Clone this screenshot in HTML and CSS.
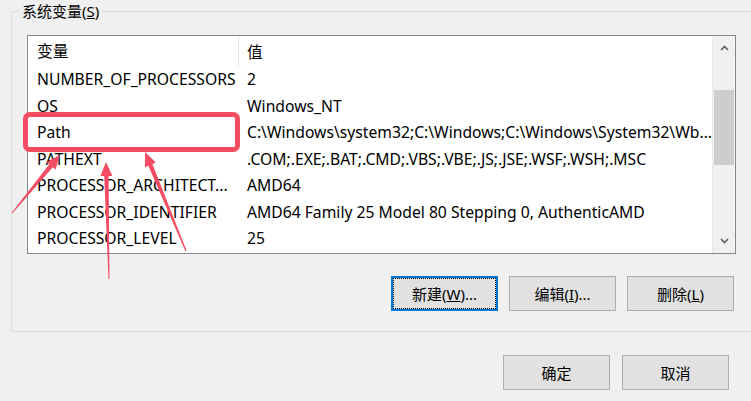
FILE: index.html
```html
<!DOCTYPE html>
<html lang="zh-CN">
<head>
<meta charset="utf-8">
<title>系统变量</title>
<link rel="stylesheet" href="styles.css">
</head>
<body>
<div class="dialog">
  <fieldset class="group">
    <legend class="group-title">系统变量(<u>S</u>)</legend>
    <div class="listbox">
      <div class="list">
        <div class="hdr">
          <div class="c1">变量</div>
          <div class="c2">值</div>
        </div>
        <div class="row"><div class="c1">NUMBER_OF_PROCESSORS</div><div class="c2">2</div></div>
        <div class="row"><div class="c1">OS</div><div class="c2">Windows_NT</div></div>
        <div class="row"><div class="c1">Path</div><div class="c2">C:\Windows\system32;C:\Windows;C:\Windows\System32\Wb...</div></div>
        <div class="row"><div class="c1">PATHEXT</div><div class="c2">.COM;.EXE;.BAT;.CMD;.VBS;.VBE;.JS;.JSE;.WSF;.WSH;.MSC</div></div>
        <div class="row"><div class="c1">PROCESSOR_ARCHITECT...</div><div class="c2">AMD64</div></div>
        <div class="row"><div class="c1">PROCESSOR_IDENTIFIER</div><div class="c2">AMD64 Family 25 Model 80 Stepping 0, AuthenticAMD</div></div>
        <div class="row"><div class="c1">PROCESSOR_LEVEL</div><div class="c2">25</div></div>
      </div>
      <div class="vscroll">
        <div class="sbtn"><svg width="9" height="6" viewBox="0 0 9 6"><polyline points="1,5 4.5,1.5 8,5" fill="none" stroke="#606060" stroke-width="1.6"/></svg></div>
        <div class="track"><div class="thumb"></div></div>
        <div class="sbtn"><svg width="9" height="6" viewBox="0 0 9 6"><polyline points="1,1 4.5,4.5 8,1" fill="none" stroke="#606060" stroke-width="1.6"/></svg></div>
      </div>
    </div>
    <div class="btns">
      <button class="btn focus">新建(<u>W</u>)...</button>
      <button class="btn">编辑(<u>I</u>)...</button>
      <button class="btn">删除(<u>L</u>)</button>
    </div>
  </fieldset>
  <div class="footer">
    <button class="btn">确定</button>
    <button class="btn">取消</button>
  </div>
  <svg class="annot" width="751" height="401" viewBox="0 0 751 401">
    <rect x="25.5" y="114.5" width="212" height="35" rx="4" ry="4" fill="none" stroke="#f34c63" stroke-width="5"/>
    <polygon fill="#f34c63" points="11.6,212.7 49.3,164.3 46.4,162 60,155 55.6,169.6 52.8,167.3 12.4,213.3"/>
    <polygon fill="#f34c63" points="108.5,279 104.2,176 100.4,176.1 106,162 112.4,175.9 108.6,176 109.5,279"/>
    <polygon fill="#f34c63" points="185.4,251.2 148.3,165.8 144.9,167.2 145,152 155.8,162.6 152.4,164.1 186.6,250.8"/>
  </svg>
</div>
</body>
</html>
```

FILE: styles.css
```css
html, body {
  margin: 0;
  padding: 0;
  background: #f0f0f0;
}

body {
  width: 751px;
  height: 401px;
  overflow: hidden;
  font-family: "Noto Sans", "Noto Sans CJK SC", sans-serif;
  font-size: 15px;
  color: #000;
}

.dialog {
  position: relative;
  width: 751px;
  height: 401px;
  display: flex;
  flex-direction: column;
}

.group {
  box-sizing: border-box;
  width: 742px;
  margin: 1px 0 0 11px;
  padding: 0 0 20px 0;
  border: 1px solid #dcdcdc;
  min-width: 0;
  display: flex;
  flex-direction: column;
}

.group-title {
  margin-left: 8px;
  padding: 0 2px;
  line-height: 20px;
  font-size: 15px;
}

.listbox {
  box-sizing: border-box;
  width: 709px;
  height: 219px;
  margin: 14px 0 0 15px;
  border: 1px solid #828790;
  background: #fff;
  display: flex;
  font-size: 15.7px;
}

.list {
  flex: 1;
  min-width: 0;
  display: flex;
  flex-direction: column;
}

.hdr {
  height: 30px;
  display: flex;
  align-items: center;
}

.hdr .c1 {
  height: 30px;
  line-height: 30px;
  border-right: 1px solid #e5e5e5;
}

.row {
  height: 26.5px;
  display: flex;
  align-items: center;
  white-space: nowrap;
}

.c1 {
  box-sizing: border-box;
  width: 211px;
  padding-left: 9px;
  flex: none;
  overflow: hidden;
}

.c2 {
  padding-left: 8px;
  overflow: hidden;
}

.vscroll {
  width: 22px;
  flex: none;
  background: #f0f0f0;
  border-left: 1px solid #e8e8e8;
  display: flex;
  flex-direction: column;
}

.sbtn {
  height: 24px;
  display: flex;
  align-items: center;
  justify-content: center;
}

.track {
  flex: 1;
  padding: 30px 1px 0 1px;
}

.thumb {
  height: 75px;
  background: #cdcdcd;
}

.btns {
  display: flex;
  justify-content: flex-end;
  gap: 11px;
  margin: 22px 18px 0 0;
}

.btn {
  box-sizing: border-box;
  width: 107px;
  height: 35px;
  background: #e1e1e1;
  border: 1px solid #adadad;
  border-radius: 0;
  font-family: "Noto Sans", "Noto Sans CJK SC", sans-serif;
  font-size: 15px;
  color: #000;
  padding: 0;
}

.btn.focus {
  border: 2px solid #0078d7;
  outline: 1px dotted #000;
  outline-offset: -3px;
}

.footer {
  display: flex;
  justify-content: flex-end;
  gap: 12px;
  margin-top: 23px;
  padding-right: 22px;
}

.annot {
  position: absolute;
  left: 0;
  top: 0;
  pointer-events: none;
}
```
